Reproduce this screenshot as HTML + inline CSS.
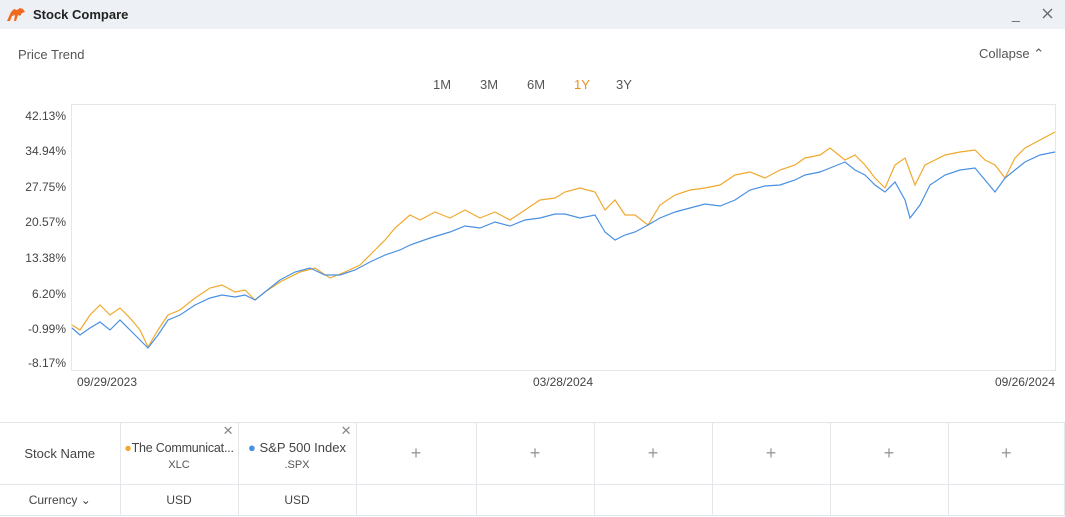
<!DOCTYPE html><html><head><meta charset="utf-8"><style>
*{margin:0;padding:0;box-sizing:border-box}
body{width:1065px;height:517px;background:#fff;font-family:"Liberation Sans",sans-serif;color:#333;position:relative;overflow:hidden;font-size:12px}
.hdr{position:absolute;left:0;top:0;width:1065px;height:29px;background:#edf1f6}
.t{position:absolute;white-space:nowrap}
table{position:absolute;left:0;top:422px;border-collapse:collapse;width:1065px;table-layout:fixed}
td{border:1px solid #e3e6ea;text-align:center;font-size:12px;color:#444;position:relative;white-space:nowrap;overflow:hidden}
td:first-child{border-left:none}
.n{font-size:13px;margin-top:4px;line-height:16px}
</style></head><body>
<div class="hdr">
<svg style="position:absolute;left:6px;top:6px" width="20" height="16" viewBox="0 0 20 16"><path d="M1 15 L5 6 L8 3 L11 4 L14 2 L17 3 L19 6 L16 7 L14 10 L12 9 L10 15 L8 15 L9 9 L6 10 L4 15Z" fill="#f06a1d"/></svg>
<div class="t" style="left:33px;top:7px;font-weight:bold;font-size:13px;color:#222">Stock Compare</div>
<div class="t" style="left:1012px;top:6px;color:#666;font-size:14px">_</div>
<svg style="position:absolute;left:1042px;top:8px" width="11" height="11"><path d="M1 1L10 10M10 1L1 10" stroke="#666" stroke-width="1.3"/></svg>
</div>
<div class="t" style="left:18px;top:47px;font-size:13px;color:#555">Price Trend</div>
<div class="t" style="left:979px;top:46px;font-size:13px;color:#555">Collapse ⌃</div>
<div class="t" style="left:433px;top:77px;font-size:13px;color:#555">1M</div>
<div class="t" style="left:480px;top:77px;font-size:13px;color:#555">3M</div>
<div class="t" style="left:527px;top:77px;font-size:13px;color:#555">6M</div>
<div class="t" style="left:574px;top:77px;font-size:13px;color:#f08c1d">1Y</div>
<div class="t" style="left:616px;top:77px;font-size:13px;color:#555">3Y</div>
<svg style="position:absolute;left:0;top:0" width="1065" height="420">
<rect x="71.5" y="104.5" width="984" height="266" fill="none" stroke="#e3e6ea"/>
<g font-family="Liberation Sans" font-size="12" fill="#444" text-anchor="end">
<text x="66" y="120">42.13%</text><text x="66" y="155">34.94%</text><text x="66" y="191">27.75%</text><text x="66" y="226">20.57%</text><text x="66" y="262">13.38%</text><text x="66" y="298">6.20%</text><text x="66" y="333">-0.99%</text><text x="66" y="367">-8.17%</text>
<text x="137" y="386">09/29/2023</text><text x="593" y="386">03/28/2024</text><text x="1055" y="386">09/26/2024</text></g>
<polyline fill="none" stroke="#f0a92e" stroke-width="1.2" points="72,325 80,330 90,315 100,305 110,315 120,308 130,318 140,330 148,347 158,330 168,315 180,310 195,298 210,288 222,285 235,292 245,290 255,300 265,292 280,282 300,272 315,268 330,278 345,272 360,265 375,250 385,240 395,228 410,215 420,220 435,212 450,218 465,210 480,218 495,212 510,220 525,210 540,200 555,198 565,192 580,188 595,192 605,210 615,200 625,215 635,215 648,225 660,205 675,195 690,190 705,188 720,185 735,175 750,172 765,178 780,170 795,165 805,158 820,155 830,148 845,160 855,155 865,165 875,178 885,188 895,165 905,158 915,185 925,165 935,160 945,155 960,152 975,150 985,160 995,165 1005,178 1015,158 1025,148 1040,140 1055,132"/>
<polyline fill="none" stroke="#4a90e2" stroke-width="1.2" points="72,328 80,335 90,328 100,322 110,330 120,320 130,330 140,340 148,348 158,335 168,320 180,315 195,305 210,298 222,295 235,297 245,295 255,300 265,292 280,280 295,272 310,268 325,275 340,275 355,270 370,262 385,255 400,250 410,245 430,238 450,232 465,226 480,228 495,222 510,226 525,220 540,218 555,214 565,214 580,218 595,215 605,232 615,240 625,235 635,232 648,225 660,218 675,212 690,208 705,204 720,206 735,200 750,190 765,186 780,185 795,180 805,175 820,172 830,168 845,162 855,170 865,175 875,185 885,192 895,182 905,200 910,218 920,205 930,185 945,175 960,170 975,168 985,180 995,192 1005,178 1015,170 1025,162 1040,155 1055,152"/>
</svg>
<table>
<colgroup><col style="width:120px"><col style="width:118px"><col style="width:118px"><col style="width:120px"><col style="width:118px"><col style="width:118px"><col style="width:118px"><col style="width:118px"><col></colgroup>
<tr style="height:62px"><td style="font-size:13px">Stock Name</td>
<td><span class="t" style="right:4px;top:0;color:#888;font-size:13px">✕</span><div class="n" style="font-size:12.5px;letter-spacing:-0.2px"><span style="color:#f0a92e">●</span>The Communicat...</div><div style="font-size:11px;color:#555;margin-top:3px">XLC</div></td>
<td><span class="t" style="right:4px;top:0;color:#888;font-size:13px">✕</span><div class="n"><span style="color:#4a90e2">●</span> S&amp;P 500 Index</div><div style="font-size:11px;color:#555;margin-top:3px">.SPX</div></td>
<td style="color:#999;font-size:18px">+</td><td style="color:#999;font-size:18px">+</td><td style="color:#999;font-size:18px">+</td><td style="color:#999;font-size:18px">+</td><td style="color:#999;font-size:18px">+</td><td style="color:#999;font-size:18px">+</td></tr>
<tr style="height:31px"><td style="font-size:12px">Currency ⌄</td><td>USD</td><td>USD</td><td></td><td></td><td></td><td></td><td></td><td></td></tr>
</table>
</body></html>
